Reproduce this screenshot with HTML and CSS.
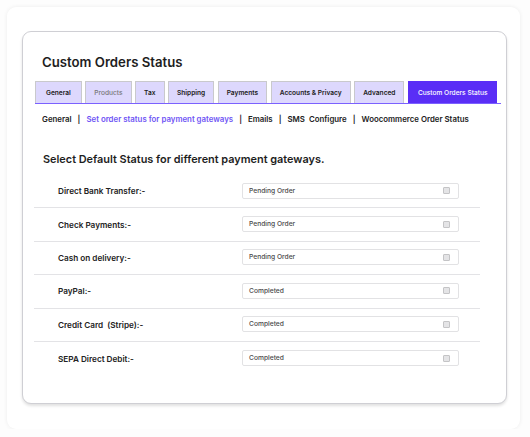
FILE: index.html
```html
<!DOCTYPE html>
<html>
<head>
<meta charset="utf-8">
<link rel="stylesheet" href="styles.css">
</head>
<body>
<div class="outer">
  <div class="card">
    <h1 class="title">Custom Orders Status</h1>
    <div class="tabs">
      <div class="tab">General</div>
      <div class="tab muted">Products</div>
      <div class="tab">Tax</div>
      <div class="tab">Shipping</div>
      <div class="tab">Payments</div>
      <div class="tab">Accounts &amp; Privacy</div>
      <div class="tab">Advanced</div>
      <div class="tab active">Custom Orders Status</div>
    </div>
    <div class="subnav">
      <span>General</span><span class="sep">|</span><span class="link">Set order status for payment gateways</span><span class="sep">|</span><span>Emails</span><span class="sep">|</span><span>SMS&nbsp; Configure</span><span class="sep">|</span><span>Woocommerce Order Status</span>
    </div>
    <h2 class="heading">Select Default Status for different payment gateways.</h2>
    <div class="rows">
      <div class="row"><div class="label">Direct Bank Transfer:-</div><div class="select"><span>Pending Order</span><i class="icon"></i></div></div>
      <div class="row"><div class="label">Check Payments:-</div><div class="select"><span>Pending Order</span><i class="icon"></i></div></div>
      <div class="row"><div class="label">Cash on delivery:-</div><div class="select"><span>Pending Order</span><i class="icon"></i></div></div>
      <div class="row"><div class="label">PayPal:-</div><div class="select"><span>Completed</span><i class="icon"></i></div></div>
      <div class="row"><div class="label">Credit Card&nbsp; (Stripe):-</div><div class="select"><span>Completed</span><i class="icon"></i></div></div>
      <div class="row last"><div class="label">SEPA Direct Debit:-</div><div class="select"><span>Completed</span><i class="icon"></i></div></div>
    </div>
  </div>
</div>
</body>
</html>
```
FILE: styles.css
```css
* { box-sizing: border-box; }
html, body { margin: 0; padding: 0; background: #fdfdfd; }
body { font-family: Inter, "Open Sans", sans-serif; color: #222; }
.outer {
  margin: 7px 0 0 7px;
  width: 513px;
  height: 422px;
  background: #fff;
  border-radius: 9px;
  box-shadow: 0 0 4px rgba(0,0,0,0.07);
  padding: 24px 0 0 15px;
}
.card {
  width: 485px;
  height: 373px;
  border: 1px solid #cfcfd4;
  border-radius: 9px;
  box-shadow: 0 2px 3px rgba(0,0,0,0.12);
  background: #fff;
}
.title {
  margin: 21px 0 0 19px;
  font-size: 13.2px;
  line-height: 18px;
  font-weight: 600;
  color: #1e1e1e;
}
.tabs {
  display: flex;
  gap: 3.5px;
  margin: 10px 5px 0 12px;
  border-bottom: 1.5px solid #7b61ff;
}
.tab {
  height: 22px;
  padding: 0 8px;
  display: flex;
  align-items: center;
  white-space: nowrap;
  font-size: 6.6px;
  font-weight: 600;
  color: #222;
  background: #ddd8fd;
  border: 1.5px solid #c9c9cc;
  border-bottom: none;
}
.tab:first-child { padding: 0 10px; }
.tab.muted { color: #777; font-weight: 500; }
.tab.active {
  background: #5a2ef6;
  border-color: #5a2ef6;
  color: #fff;
  font-weight: 500;
  padding: 0 9px;
}
.subnav {
  margin: 9px 0 0 19px;
  font-size: 7.85px;
  line-height: 12px;
  font-weight: 600;
  color: #222;
  white-space: nowrap;
}
.subnav .sep { margin: 0 6px; }
.subnav .link { color: #6f55f5; }
.heading {
  margin: 27px 0 0 20px;
  font-size: 10.9px;
  line-height: 14px;
  font-weight: 600;
  color: #1e1e1e;
}
.rows {
  margin: 9px 0 0 11px;
  width: 446px;
}
.row {
  height: 33.4px;
  border-bottom: 1px solid #e3e3e6;
  display: flex;
  align-items: center;
}
.row.last { border-bottom: none; }
.label {
  width: 208px;
  padding-left: 24px;
  font-size: 8.2px;
  font-weight: 600;
  color: #222;
}
.select {
  width: 217px;
  height: 16px;
  border: 1px solid #e2e2e4;
  border-radius: 2px;
  display: flex;
  align-items: center;
  justify-content: space-between;
  padding: 0 8px 0 6px;
  font-size: 6.7px;
  font-weight: 500;
  color: #4a4a4a;
  margin-top: -1px;
}
.icon {
  width: 7px;
  height: 7px;
  border: 1.5px solid #c4c4c6;
  background: #e4e4e6;
  border-radius: 1px;
}
```
